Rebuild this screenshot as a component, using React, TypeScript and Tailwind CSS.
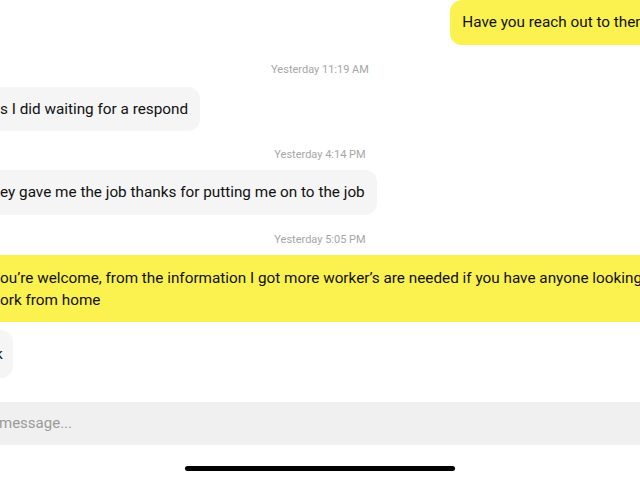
export default function App() {
  return (
    <div
      className="w-[640px] h-[480px] overflow-hidden bg-white flex flex-col text-[15.3px] text-[#111]"
      style={{ fontFamily: 'Roboto, "Noto Sans", sans-serif' }}
    >
      {/* outgoing */}
      <div className="flex justify-end">
        <div className="mr-[-48px] rounded-[12px] bg-[#fbf24f] pl-3 pr-8 py-3 leading-[21px] whitespace-nowrap">
          Have you reach out to them?
        </div>
      </div>

      <p className="mt-[18px] text-center text-[11px] leading-[14px] text-[#a6a6a6]">Yesterday 11:19 AM</p>

      <div className="self-start mt-[10px] ml-[-20px] rounded-[12px] bg-[#f5f5f5] pl-5 pr-3 py-3 leading-[20px] whitespace-nowrap">
        s I did waiting for a respond
      </div>

      <p className="mt-[17px] text-center text-[11px] leading-[14px] text-[#a6a6a6]">Yesterday 4:14 PM</p>

      <div className="self-start mt-[8px] ml-[-20px] rounded-[12px] bg-[#f5f5f5] pl-5 pr-3 py-3 leading-[21px] whitespace-nowrap">
        ey gave me the job thanks for putting me on to the job
      </div>

      <p className="mt-[18px] text-center text-[11px] leading-[14px] text-[#a6a6a6]">Yesterday 5:05 PM</p>

      <div className="mt-[8px] mx-[-20px] rounded-[12px] bg-[#fbf24f] pl-5 pr-5 py-[11.5px] leading-[22px] whitespace-nowrap">
        <span className="block">ou’re welcome, from the information I got more worker’s are needed if you have anyone looking for</span>
        <span className="block">ork from home</span>
      </div>

      <div className="self-start mt-[8px] ml-[-18px] h-[48px] flex items-center rounded-[12px] bg-[#f5f5f5] pl-5 pr-[10px]">
        <span className="ml-[-7px]">k</span>
      </div>

      <div className="mt-[24px] h-[43px] bg-[#f0f0f0] flex items-center overflow-hidden">
        <input
          className="ml-[-1px] w-full bg-transparent outline-none text-[15px] placeholder:text-[#9b9b9b]"
          placeholder="message..."
        />
      </div>

      <div className="mt-[21px] mx-auto w-[270px] h-[5px] rounded-full bg-black" />
    </div>
  );
}
